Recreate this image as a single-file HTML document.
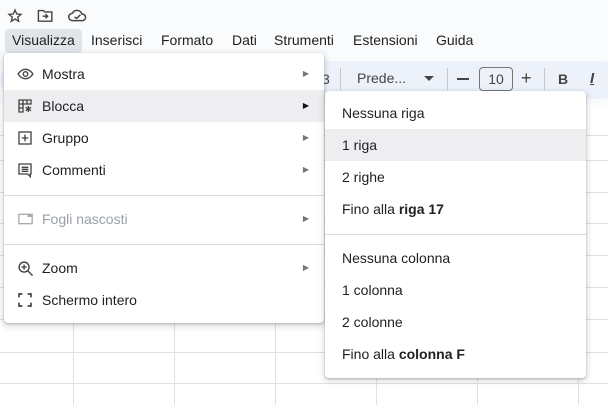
<!DOCTYPE html>
<html><head><meta charset="utf-8"><style>
*{margin:0;padding:0;box-sizing:border-box}
body{width:608px;height:405px;overflow:hidden;background:#fff;font-family:"Liberation Sans",Arial,sans-serif;position:relative;color:#202124}
.top{position:absolute;left:0;top:0;width:608px;height:105px;background:#f9fbfd}
.tb{position:absolute;left:0;top:61px;width:620px;height:38px;background:#edf2fa;border-radius:20px}
.mb{position:absolute;top:32px;font-size:14px;color:#1f1f1f}
.hl{position:absolute;left:5px;top:29px;width:77px;height:24px;background:#e1e5ea;border-radius:4px}
.vl{position:absolute;width:1px;background:#e1e1e1}
.hr{position:absolute;height:1px;background:#e1e1e1;left:0;width:608px}
.menu{position:absolute;background:#fff;border-radius:4px;box-shadow:0 2px 6px 2px rgba(60,64,67,.15),0 1px 2px rgba(60,64,67,.3)}
.it{position:absolute;left:0;right:0;height:32px;font-size:14px;line-height:32px;color:#202124}
.it .t{position:absolute;left:38px}
.sub .it .t{left:17px}
.arr{position:absolute;right:15px;top:0;font-size:8px;color:#757575}
.sel{background:#eeeef1}
.sep{position:absolute;left:0;right:0;height:1px;background:#dadce0}
.ic{position:absolute;left:13px;top:8px}
</style></head><body>
<div class="top"></div>
<div class="tb"></div>
<svg style="position:absolute;left:7px;top:8px" width="16" height="16" viewBox="0 0 24 24"><path d="M12 3l2.6 6 6.4.5-4.9 4.2 1.5 6.3L12 16.6 6.4 20l1.5-6.3L3 9.5 9.4 9z" fill="none" stroke="#444" stroke-width="2"/></svg>
<svg style="position:absolute;left:37px;top:8px" width="17" height="15" viewBox="0 0 24 20"><path d="M2 3h7l2 2h10v13H2z" fill="none" stroke="#444" stroke-width="2"/><path d="M8 11h7M12 8l3 3-3 3" fill="none" stroke="#444" stroke-width="2"/></svg>
<svg style="position:absolute;left:68px;top:8px" width="19" height="15" viewBox="0 0 26 18"><path d="M6 16a5 5 0 0 1 0-10 7 7 0 0 1 13 1 4.5 4.5 0 0 1 1 9z" fill="none" stroke="#444" stroke-width="2"/><path d="M9 11l3 2 5-5" fill="none" stroke="#444" stroke-width="2"/></svg>
<div class="hl"></div>
<div class="mb" style="left:12px">Visualizza</div>
<div class="mb" style="left:91px">Inserisci</div>
<div class="mb" style="left:161px">Formato</div>
<div class="mb" style="left:232px">Dati</div>
<div class="mb" style="left:274px">Strumenti</div>
<div class="mb" style="left:353px">Estensioni</div>
<div class="mb" style="left:436px">Guida</div>
<div style="position:absolute;left:322px;top:71px;font-size:14px;color:#444">3</div>
<div style="position:absolute;left:340px;top:68px;width:1px;height:22px;background:#c7c7c7"></div>
<div style="position:absolute;left:357px;top:70px;font-size:14px;color:#444">Prede...</div>
<div style="position:absolute;left:424px;top:76px;border:5px solid transparent;border-top-color:#444;border-bottom:0"></div>
<div style="position:absolute;left:447px;top:68px;width:1px;height:22px;background:#c7c7c7"></div>
<div style="position:absolute;left:457px;top:78px;width:12px;height:2px;background:#444"></div>
<div style="position:absolute;left:479px;top:67px;width:34px;height:24px;border:1px solid #747775;border-radius:4px;font-size:14px;text-align:center;line-height:22px;color:#444">10</div>
<div style="position:absolute;left:521px;top:68px;font-size:18px;color:#444">+</div>
<div style="position:absolute;left:544px;top:68px;width:1px;height:22px;background:#c7c7c7"></div>
<div style="position:absolute;left:558px;top:71px;font-size:14px;font-weight:bold;color:#444">B</div>
<div style="position:absolute;left:590px;top:70px;font-size:15px;font-style:italic;font-weight:bold;color:#444;text-decoration:underline">I</div>
<!-- grid -->
<div class="hr" style="top:352px"></div><div class="hr" style="top:383px"></div>
<div class="hr" style="top:135px"></div><div class="hr" style="top:160px"></div><div class="hr" style="top:192px"></div><div class="hr" style="top:223px"></div><div class="hr" style="top:255px"></div><div class="hr" style="top:287px"></div><div class="hr" style="top:319px"></div>
<div class="vl" style="left:73px;top:323px;height:82px"></div>
<div class="vl" style="left:174px;top:323px;height:82px"></div>
<div class="vl" style="left:275px;top:323px;height:82px"></div>
<div class="vl" style="left:376px;top:377px;height:28px"></div>
<div class="vl" style="left:477px;top:377px;height:28px"></div>
<div class="vl" style="left:578px;top:377px;height:28px"></div>
<!-- main menu -->
<div class="menu" style="left:4px;top:53px;width:320px;height:270px">
 <div class="it" style="top:5px"><svg class="ic" width="17" height="16" viewBox="0 0 24 24"><path d="M1 12s4-7 11-7 11 7 11 7-4 7-11 7S1 12 1 12z" fill="none" stroke="#444" stroke-width="2"/><circle cx="12" cy="12" r="3.5" fill="none" stroke="#444" stroke-width="2"/></svg><span class="t">Mostra</span><span class="arr">▶</span></div>
 <div class="it sel" style="top:37px"><svg class="ic" width="16" height="16" viewBox="0 0 24 24"><path d="M3 3h18v6H9v12H3zM3 9h6M3 15h6M9 3v6M15 3v6" fill="none" stroke="#444" stroke-width="2"/><path d="M17 12v9M13 14l8 5M21 14l-8 5" stroke="#444" stroke-width="2"/></svg><span class="t">Blocca</span><span class="arr" style="color:#111">▶</span></div>
 <div class="it" style="top:69px"><svg class="ic" width="16" height="16" viewBox="0 0 24 24"><rect x="3" y="3" width="18" height="18" fill="none" stroke="#444" stroke-width="2"/><path d="M12 7v10M7 12h10" stroke="#444" stroke-width="2"/></svg><span class="t">Gruppo</span><span class="arr">▶</span></div>
 <div class="it" style="top:101px"><svg class="ic" width="16" height="16" viewBox="0 0 24 24"><path d="M3 3h18v15h-1v4l-4-4H3z" fill="none" stroke="#444" stroke-width="2"/><path d="M7 8h10M7 11h10M7 14h10" stroke="#444" stroke-width="2"/></svg><span class="t">Commenti</span><span class="arr">▶</span></div>
 <div class="sep" style="top:142px"></div>
 <div class="it" style="top:150px;color:#9aa0a6"><svg class="ic" width="17" height="16" viewBox="0 0 24 24"><rect x="2" y="5" width="20" height="14" fill="none" stroke="#aaa" stroke-width="2"/><rect x="15" y="5" width="7" height="4" fill="#aaa"/></svg><span class="t">Fogli nascosti</span><span class="arr">▶</span></div>
 <div class="sep" style="top:191px"></div>
 <div class="it" style="top:199px"><svg class="ic" width="17" height="17" viewBox="0 0 24 24"><circle cx="10" cy="10" r="7" fill="none" stroke="#444" stroke-width="2"/><path d="M15 15l7 7M10 6.5v7M6.5 10h7" stroke="#444" stroke-width="2"/></svg><span class="t">Zoom</span><span class="arr">▶</span></div>
 <div class="it" style="top:231px"><svg class="ic" width="16" height="16" viewBox="0 0 24 24"><path d="M3 8V3h5M16 3h5v5M21 16v5h-5M8 21H3v-5" fill="none" stroke="#444" stroke-width="2.5"/></svg><span class="t">Schermo intero</span></div>
</div>
<!-- submenu -->
<div class="menu sub" style="left:325px;top:91px;width:261px;height:287px">
 <div class="it" style="top:6px"><span class="t">Nessuna riga</span></div>
 <div class="it sel" style="top:38px"><span class="t">1 riga</span></div>
 <div class="it" style="top:70px"><span class="t">2 righe</span></div>
 <div class="it" style="top:102px"><span class="t">Fino alla <b>riga 17</b></span></div>
 <div class="sep" style="top:143px"></div>
 <div class="it" style="top:151px"><span class="t">Nessuna colonna</span></div>
 <div class="it" style="top:183px"><span class="t">1 colonna</span></div>
 <div class="it" style="top:215px"><span class="t">2 colonne</span></div>
 <div class="it" style="top:247px"><span class="t">Fino alla <b>colonna F</b></span></div>
</div>
</body></html>
